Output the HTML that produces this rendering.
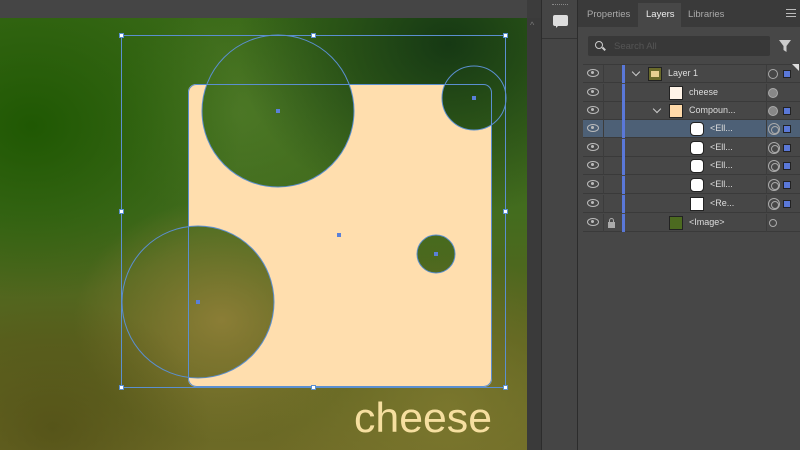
<!DOCTYPE html>
<html><head><style>
*{margin:0;padding:0;box-sizing:border-box}
body{width:800px;height:450px;overflow:hidden;background:#3c3c3c;font-family:"Liberation Sans",sans-serif;position:relative}
.abs{position:absolute}
.row{position:absolute;left:583px;width:217px;height:18px;border-bottom:1px solid #3a3a3a;background:#474747}
.row .eye{position:absolute;left:4px;top:4px;width:12px;height:8px;border-radius:50%/50%;border:1.5px solid #bbb}
.row .eye:after{content:"";position:absolute;left:3px;top:1px;width:3px;height:3px;background:#bbb;border-radius:50%}
.row .bar{position:absolute;left:39px;top:0;width:3px;height:18px;background:#5a78d8}
.row .sep{position:absolute;left:20px;top:0;width:1px;height:18px;background:#3c3c3c}
.row .sep2{position:absolute;left:183px;top:0;width:1px;height:18px;background:#3c3c3c}
.row .t{position:absolute;top:3px;font-size:9px;color:#ddd}
.row .th{position:absolute;top:2px;width:14px;height:14px;background:#fff;border:1px solid #222}
.row .tg{position:absolute;left:185px;top:4px;width:10px;height:10px;border-radius:50%;border:1px solid #aaa}
.row .tg2{position:absolute;left:185px;top:3px;width:12px;height:12px;border-radius:50%;border:1px solid #aaa}
.row .tg2:after{content:"";position:absolute;left:2px;top:2px;width:6px;height:6px;border-radius:50%;border:1px solid #aaa}
.row .sq{position:absolute;left:200px;top:5px;width:8px;height:8px;background:#5a78d8;border:1px solid #222}
.chev{position:absolute;top:4px;width:6px;height:6px;border-right:1.5px solid #ccc;border-bottom:1.5px solid #ccc;transform:rotate(45deg)}
</style></head><body>
<div class="abs" style="left:0;top:0;width:527px;height:18px;background:#454545"></div>
<svg class="abs" style="left:0;top:18px" width="527" height="432" viewBox="0 18 527 432">
<defs>
<linearGradient id="g1" x1="0" y1="0" x2="0" y2="1">
<stop offset="0" stop-color="#3a6a18"/><stop offset="0.45" stop-color="#436c1e"/><stop offset="0.75" stop-color="#5a621e"/><stop offset="1" stop-color="#6d6a26"/></linearGradient>
<radialGradient id="g2" cx="0.85" cy="0.06" r="0.4"><stop offset="0" stop-color="#143614" stop-opacity="0.95"/><stop offset="1" stop-color="#143614" stop-opacity="0"/></radialGradient>
<radialGradient id="g3" cx="0.06" cy="0.25" r="0.4"><stop offset="0" stop-color="#1c5600" stop-opacity="0.9"/><stop offset="1" stop-color="#1c5600" stop-opacity="0"/></radialGradient>
<radialGradient id="g4" cx="0.42" cy="0.7" r="0.28"><stop offset="0" stop-color="#94823a" stop-opacity="0.85"/><stop offset="1" stop-color="#94823a" stop-opacity="0"/></radialGradient>
<radialGradient id="g5" cx="0.85" cy="0.9" r="0.35"><stop offset="0" stop-color="#7f7a30" stop-opacity="0.8"/><stop offset="1" stop-color="#7f7a30" stop-opacity="0"/></radialGradient>
<radialGradient id="g6" cx="0.45" cy="0.22" r="0.25"><stop offset="0" stop-color="#4f7a28" stop-opacity="0.8"/><stop offset="1" stop-color="#4f7a28" stop-opacity="0"/></radialGradient>
<radialGradient id="g7" cx="0.1" cy="0.95" r="0.3"><stop offset="0" stop-color="#4e4c14" stop-opacity="0.7"/><stop offset="1" stop-color="#4e4c14" stop-opacity="0"/></radialGradient>
<mask id="m"><rect x="188" y="84" width="304" height="303" rx="8" fill="#fff"/>
<circle cx="278" cy="111" r="76" fill="#000"/><circle cx="474" cy="98" r="32" fill="#000"/><circle cx="198" cy="302" r="76" fill="#000"/><circle cx="436" cy="254" r="19" fill="#000"/></mask>
</defs>
<rect x="0" y="18" width="527" height="432" fill="url(#g1)"/>
<rect x="0" y="18" width="527" height="432" fill="url(#g6)"/>
<rect x="0" y="18" width="527" height="432" fill="url(#g2)"/>
<rect x="0" y="18" width="527" height="432" fill="url(#g3)"/>
<rect x="0" y="18" width="527" height="432" fill="url(#g4)"/>
<rect x="0" y="18" width="527" height="432" fill="url(#g5)"/>
<rect x="0" y="18" width="527" height="432" fill="url(#g7)"/>
<rect x="190" y="88" width="304" height="303" rx="8" fill="#000" opacity="0.15" mask="url(#m)"/>
<rect x="0" y="0" width="527" height="450" fill="#ffdeae" mask="url(#m)"/>
<g fill="none" stroke="#5b8fd0" stroke-width="1">
<rect x="121.5" y="35.5" width="384" height="352"/>
<rect x="188.5" y="84.5" width="303" height="302" rx="8"/>
<circle cx="278" cy="111" r="76"/><circle cx="474" cy="98" r="32"/><circle cx="198" cy="302" r="76"/><circle cx="436" cy="254" r="19"/>
</g>
<g fill="#fff" stroke="#5b8fd0" stroke-width="1">
<rect x="119.5" y="33.5" width="4" height="4"/><rect x="311.5" y="33.5" width="4" height="4"/><rect x="503.5" y="33.5" width="4" height="4"/>
<rect x="119.5" y="209.5" width="4" height="4"/><rect x="503.5" y="209.5" width="4" height="4"/>
<rect x="119.5" y="385.5" width="4" height="4"/><rect x="311.5" y="385.5" width="4" height="4"/><rect x="503.5" y="385.5" width="4" height="4"/>
</g>
<g fill="#5a80d8"><rect x="276" y="109" width="4" height="4"/><rect x="472" y="96" width="4" height="4"/><rect x="196" y="300" width="4" height="4"/><rect x="434" y="252" width="4" height="4"/><rect x="337" y="233" width="4" height="4"/></g>
<text x="354" y="432" font-family="Liberation Sans,sans-serif" font-size="42" fill="#f6dfa0" textLength="138" lengthAdjust="spacingAndGlyphs">cheese</text>
</svg>
<div class="abs" style="left:527px;top:18px;width:14px;height:432px;background:#3a3a3a"></div>
<div class="abs" style="left:530px;top:20px;color:#777;font-size:9px">^</div>
<div class="abs" style="left:541px;top:0;width:1px;height:450px;background:#2c2c2c"></div>
<div class="abs" style="left:542px;top:0;width:35px;height:450px;background:#454545"></div>
<div class="abs" style="left:542px;top:38px;width:35px;height:1px;background:#333"></div>
<div class="abs" style="left:552px;top:4px;width:16px;height:2px;border-top:1px dotted #888"></div>
<div class="abs" style="left:553px;top:15px;width:15px;height:11px;background:#ddd;border-radius:2px"></div>
<div class="abs" style="left:556px;top:25px;width:0;height:0;border-left:3px solid #ddd;border-bottom:3px solid transparent"></div>
<div class="abs" style="left:577px;top:0;width:1px;height:450px;background:#2c2c2c"></div>
<div class="abs" style="left:578px;top:0;width:222px;height:450px;background:#474747"></div>
<div class="abs" style="left:578px;top:0;width:222px;height:27px;background:#3a3a3a"></div>
<div class="abs" style="left:638px;top:3px;width:43px;height:24px;background:#474747"></div>
<div class="abs" style="left:587px;top:9px;font-size:9.5px;color:#aaa">Properties</div>
<div class="abs" style="left:646px;top:9px;font-size:9.5px;color:#eee">Layers</div>
<div class="abs" style="left:688px;top:9px;font-size:9.5px;color:#aaa">Libraries</div>
<div class="abs" style="left:786px;top:9px;width:10px;height:8px;border-top:1.5px solid #bbb;border-bottom:1.5px solid #bbb"></div>
<div class="abs" style="left:786px;top:12.5px;width:10px;height:1.5px;background:#bbb"></div>
<div class="abs" style="left:588px;top:36px;width:182px;height:20px;background:#383838;border-radius:2px"></div>
<div class="abs" style="left:595px;top:41px;width:8px;height:8px;border:1.5px solid #ccc;border-radius:50%"></div>
<div class="abs" style="left:602px;top:48px;width:4px;height:1.5px;background:#ccc;transform:rotate(45deg)"></div>
<div class="abs" style="left:614px;top:41px;font-size:9.5px;color:#555">Search All</div>
<svg class="abs" style="left:779px;top:40px" width="12" height="12"><path d="M0 0H12L7.5 6V12L4.5 10V6Z" fill="#ccc"/></svg>
<div class="abs" style="left:583px;top:64px;width:217px;height:1px;background:#3a3a3a"></div>

<div class="row" style="top:65px"><div class="eye"></div><div class="sep"></div><div class="bar"></div><div class="chev" style="left:50px"></div><div class="th" style="left:65px;background:#6a6a2a;border-color:#222"><div style="margin:3px 2px;width:8px;height:6px;background:#e8d090"></div></div><div class="t" style="left:85px">Layer 1</div><div class="sep2"></div><div class="tg"></div><div class="sq"></div><div class="abs" style="left:209px;top:-1px;border-left:7px solid transparent;border-top:7px solid #ddd"></div></div>
<div class="row" style="top:84px"><div class="eye"></div><div class="sep"></div><div class="bar"></div><div class="th" style="left:86px;background:#fff4e8"></div><div class="t" style="left:106px">cheese</div><div class="sep2"></div><div class="tg" style="background:#888"></div></div>
<div class="row" style="top:102px"><div class="eye"></div><div class="sep"></div><div class="bar"></div><div class="chev" style="left:71px"></div><div class="th" style="left:86px;background:#ffd9a8"></div><div class="t" style="left:106px">Compoun...</div><div class="sep2"></div><div class="tg" style="background:#888"></div><div class="sq"></div></div>
<div class="row" style="top:120px;background:#4d6076"><div class="eye"></div><div class="sep"></div><div class="bar"></div><div class="th" style="left:107px;border-radius:4px"></div><div class="t" style="left:127px">&lt;Ell...</div><div class="sep2"></div><div class="tg2"></div><div class="sq"></div></div>
<div class="row" style="top:139px"><div class="eye"></div><div class="sep"></div><div class="bar"></div><div class="th" style="left:107px;border-radius:4px"></div><div class="t" style="left:127px">&lt;Ell...</div><div class="sep2"></div><div class="tg2"></div><div class="sq"></div></div>
<div class="row" style="top:157px"><div class="eye"></div><div class="sep"></div><div class="bar"></div><div class="th" style="left:107px;border-radius:4px"></div><div class="t" style="left:127px">&lt;Ell...</div><div class="sep2"></div><div class="tg2"></div><div class="sq"></div></div>
<div class="row" style="top:176px"><div class="eye"></div><div class="sep"></div><div class="bar"></div><div class="th" style="left:107px;border-radius:4px"></div><div class="t" style="left:127px">&lt;Ell...</div><div class="sep2"></div><div class="tg2"></div><div class="sq"></div></div>
<div class="row" style="top:195px"><div class="eye"></div><div class="sep"></div><div class="bar"></div><div class="th" style="left:107px"></div><div class="t" style="left:127px">&lt;Re...</div><div class="sep2"></div><div class="tg2"></div><div class="sq"></div></div>
<div class="row" style="top:214px"><div class="eye"></div><div class="sep"></div><div class="abs" style="left:25px;top:8px;width:7px;height:6px;background:#aaa"></div><div class="abs" style="left:26px;top:4px;width:5px;height:6px;border:1.5px solid #aaa;border-radius:3px 3px 0 0"></div><div class="bar"></div><div class="th" style="left:86px;background:#4c6a20"></div><div class="t" style="left:106px">&lt;Image&gt;</div><div class="sep2"></div><div class="tg" style="width:8px;height:8px;top:5px;left:186px"></div></div>
</body></html>
